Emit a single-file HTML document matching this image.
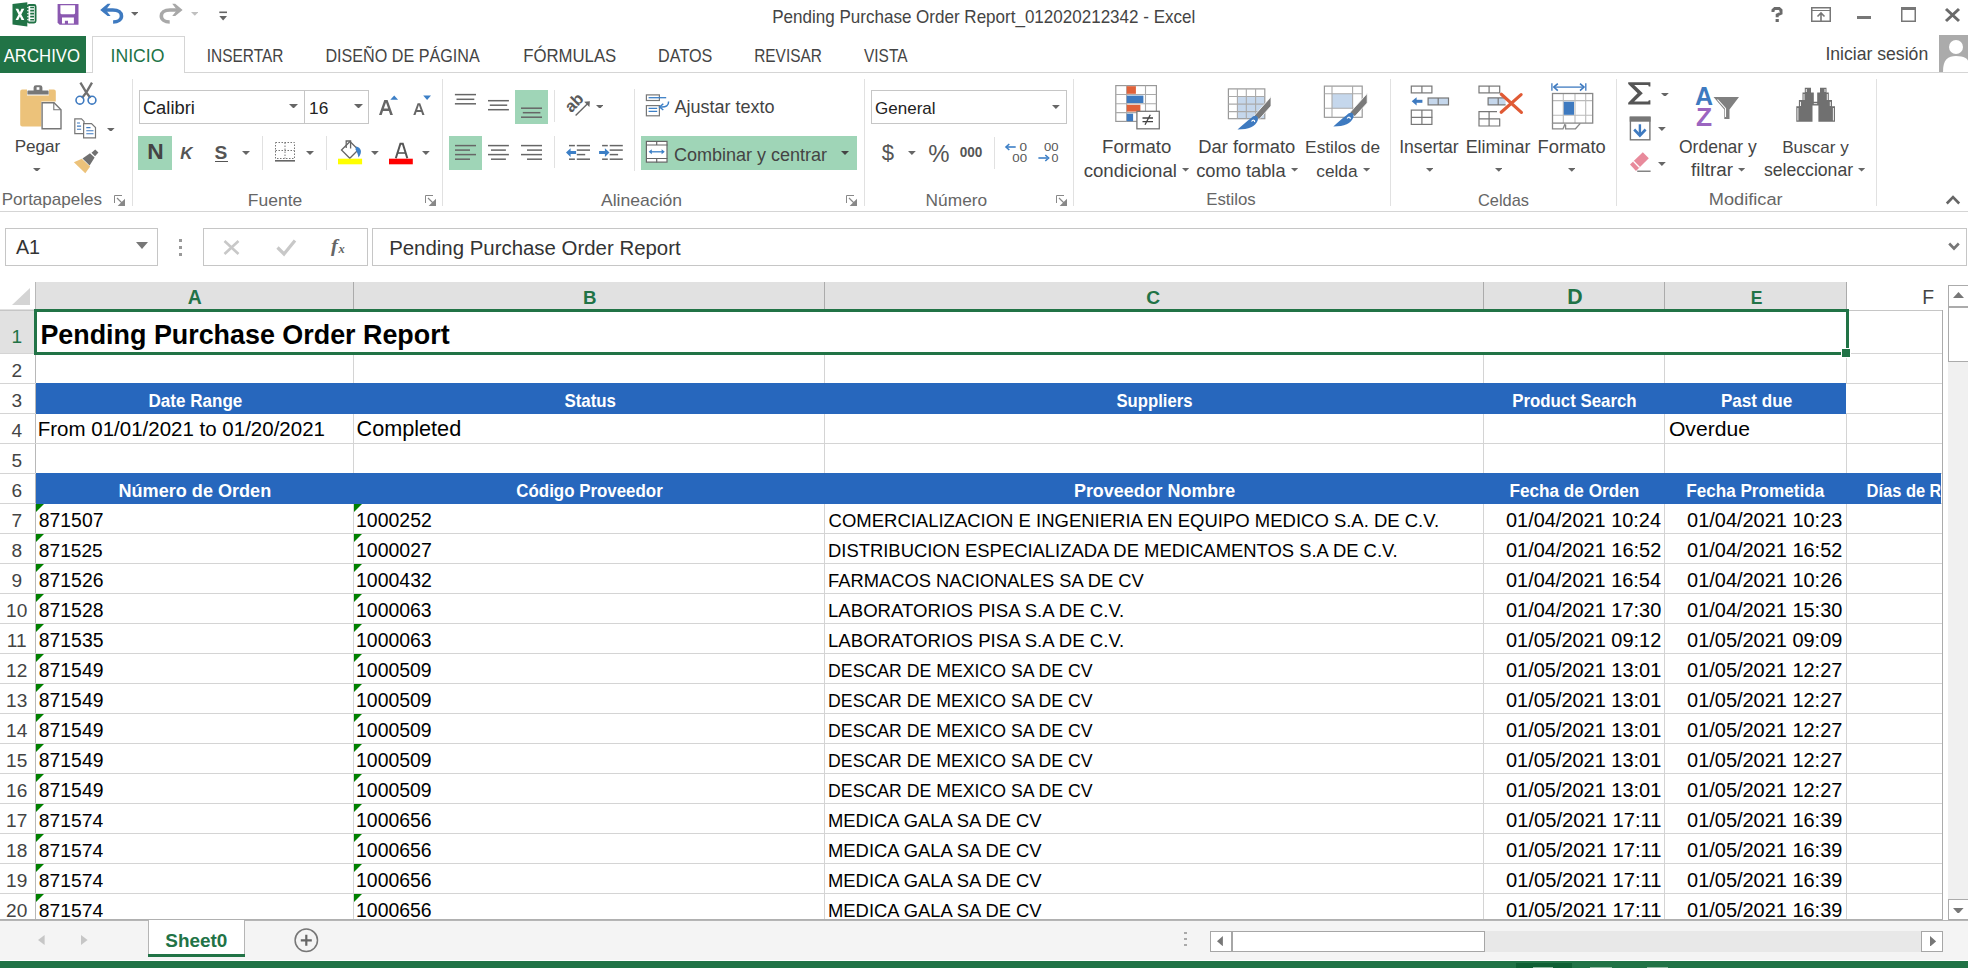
<!DOCTYPE html><html><head><meta charset="utf-8"><style>
html,body{margin:0;padding:0;}
body{width:1968px;height:968px;position:relative;overflow:hidden;background:#fff;font-family:'Liberation Sans',sans-serif;}
.t{position:absolute;white-space:pre;line-height:1;}
.b{position:absolute;}
</style></head><body>
<svg class="b" style="left:130.89999999999998px;top:11.799999999999999px" width="7.6" height="3.8" viewBox="0 0 7.6 3.8"><path d="M0 0H7.6L3.8 3.8Z" fill="#666"/></svg>
<svg class="b" style="left:190.89999999999998px;top:11.799999999999999px" width="7.6" height="3.8" viewBox="0 0 7.6 3.8"><path d="M0 0H7.6L3.8 3.8Z" fill="#c0c0c0"/></svg>
<svg class="b" style="left:1771px;top:7px" width="12" height="15" viewBox="0 0 12 15"><path d="M2 5 V3.2 L3.8 1.5 H8.2 L10 3.2 V6.2 L6.2 8 V10.2" fill="none" stroke="#6a6a6a" stroke-width="3"/><rect x="4.6" y="12" width="3.2" height="3" fill="#6a6a6a"/></svg>
<svg class="b" style="left:1811px;top:7px" width="20" height="15" viewBox="0 0 20 15"><rect x="0.75" y="0.75" width="18.5" height="13.5" fill="none" stroke="#777" stroke-width="1.5"/><path d="M1 3.5H19" stroke="#777" stroke-width="1"/><path d="M10 14V6.5M6.5 9.5L10 6L13.5 9.5" fill="none" stroke="#777" stroke-width="1.6"/></svg>
<div class="b" style="left:1857px;top:16px;width:14px;height:3px;background:#777;"></div>
<svg class="b" style="left:1901px;top:7px" width="15" height="15" viewBox="0 0 15 15"><rect x="0.75" y="0.75" width="13.5" height="13.5" fill="none" stroke="#777" stroke-width="1.5"/><rect x="0" y="0" width="15" height="3" fill="#777"/></svg>
<svg class="b" style="left:1943.5px;top:6.5px" width="17" height="16" viewBox="0 0 17 16"><path d="M2 2L15 14M15 2L2 14" stroke="#6a6a6a" stroke-width="3"/></svg>
<div class="b" style="left:0px;top:72px;width:1968px;height:1px;background:#d5d5d5;"></div>
<div class="b" style="left:0px;top:36px;width:86px;height:37px;background:#217346;"></div>
<div class="b" style="left:92px;top:36px;width:93px;height:37px;background:#fff;border:1px solid #d5d5d5;box-sizing:border-box;border-bottom:none;"></div>
<svg class="b" style="left:1939px;top:35px" width="29" height="37" viewBox="0 0 29 37"><rect width="29" height="37" fill="#ababab"/><circle cx="17" cy="12" r="7" fill="#fff"/><path d="M4 37 C4 24, 9 21, 17 21 C 25 21, 29 24, 29 26 V37Z" fill="#fff"/></svg>
<div class="b" style="left:0px;top:211px;width:1968px;height:1px;background:#d5d5d5;"></div>
<div class="b" style="left:132px;top:79px;width:1px;height:127px;background:#e1e1e1;"></div>
<div class="b" style="left:442px;top:79px;width:1px;height:127px;background:#e1e1e1;"></div>
<div class="b" style="left:864px;top:79px;width:1px;height:127px;background:#e1e1e1;"></div>
<div class="b" style="left:1073px;top:79px;width:1px;height:127px;background:#e1e1e1;"></div>
<div class="b" style="left:1390px;top:79px;width:1px;height:127px;background:#e1e1e1;"></div>
<div class="b" style="left:1616px;top:79px;width:1px;height:127px;background:#e1e1e1;"></div>
<div class="b" style="left:1876px;top:79px;width:1px;height:127px;background:#e1e1e1;"></div>
<svg class="b" style="left:114px;top:195px" width="11" height="11" viewBox="0 0 11 11"><path d="M0.5 8V0.5H8" fill="none" stroke="#888" stroke-width="1"/><path d="M3 3L9 9M10.5 5V10.5H5Z" stroke="#888" stroke-width="1.2" fill="#888"/></svg>
<svg class="b" style="left:425px;top:195px" width="11" height="11" viewBox="0 0 11 11"><path d="M0.5 8V0.5H8" fill="none" stroke="#888" stroke-width="1"/><path d="M3 3L9 9M10.5 5V10.5H5Z" stroke="#888" stroke-width="1.2" fill="#888"/></svg>
<svg class="b" style="left:846px;top:195px" width="11" height="11" viewBox="0 0 11 11"><path d="M0.5 8V0.5H8" fill="none" stroke="#888" stroke-width="1"/><path d="M3 3L9 9M10.5 5V10.5H5Z" stroke="#888" stroke-width="1.2" fill="#888"/></svg>
<svg class="b" style="left:1056px;top:195px" width="11" height="11" viewBox="0 0 11 11"><path d="M0.5 8V0.5H8" fill="none" stroke="#888" stroke-width="1"/><path d="M3 3L9 9M10.5 5V10.5H5Z" stroke="#888" stroke-width="1.2" fill="#888"/></svg>
<svg class="b" style="left:1945px;top:194px" width="16" height="11" viewBox="0 0 16 11"><path d="M1.8 9.5L8 3.2L14.2 9.5" fill="none" stroke="#666" stroke-width="2.6"/></svg>
<svg class="b" style="left:33.400000000000006px;top:167.6px" width="7.6" height="3.8" viewBox="0 0 7.6 3.8"><path d="M0 0H7.6L3.8 3.8Z" fill="#666"/></svg>
<svg class="b" style="left:107.0px;top:127.5px" width="7.6" height="3.8" viewBox="0 0 7.6 3.8"><path d="M0 0H7.6L3.8 3.8Z" fill="#666"/></svg>
<div class="b" style="left:139px;top:90px;width:166px;height:34px;background:#fff;border:1px solid #c6c6c6;box-sizing:border-box;"></div>
<div class="b" style="left:304px;top:90px;width:65px;height:34px;background:#fff;border:1px solid #c6c6c6;box-sizing:border-box;"></div>
<svg class="b" style="left:288.5px;top:103.75px" width="9.0" height="4.5" viewBox="0 0 9.0 4.5"><path d="M0 0H9.0L4.5 4.5Z" fill="#666"/></svg>
<svg class="b" style="left:353.5px;top:103.75px" width="9.0" height="4.5" viewBox="0 0 9.0 4.5"><path d="M0 0H9.0L4.5 4.5Z" fill="#666"/></svg>
<div class="b" style="left:138px;top:136px;width:34px;height:34px;background:#9fd5b7;"></div>
<div class="b" style="left:214.5px;top:160.5px;width:13px;height:1.5px;background:#555;"></div>
<svg class="b" style="left:242px;top:151.0px" width="8" height="4" viewBox="0 0 8 4"><path d="M0 0H8L4 4Z" fill="#666"/></svg>
<div class="b" style="left:262px;top:136px;width:1px;height:34px;background:#e1e1e1;"></div>
<svg class="b" style="left:306px;top:151.0px" width="8" height="4" viewBox="0 0 8 4"><path d="M0 0H8L4 4Z" fill="#666"/></svg>
<div class="b" style="left:326px;top:136px;width:1px;height:34px;background:#e1e1e1;"></div>
<svg class="b" style="left:370.8px;top:151.05px" width="7.8" height="3.9" viewBox="0 0 7.8 3.9"><path d="M0 0H7.8L3.9 3.9Z" fill="#666"/></svg>
<svg class="b" style="left:421.90000000000003px;top:151.05px" width="7.8" height="3.9" viewBox="0 0 7.8 3.9"><path d="M0 0H7.8L3.9 3.9Z" fill="#666"/></svg>
<div class="b" style="left:515px;top:89.7px;width:33px;height:34px;background:#9fd5b7;"></div>
<div class="b" style="left:554px;top:89.7px;width:1px;height:32.5px;background:#e1e1e1;"></div>
<svg class="b" style="left:595.8000000000001px;top:104.5px" width="7.6" height="3.8" viewBox="0 0 7.6 3.8"><path d="M0 0H7.6L3.8 3.8Z" fill="#666"/></svg>
<div class="b" style="left:634px;top:89px;width:1px;height:82px;background:#e1e1e1;"></div>
<div class="b" style="left:449px;top:136.2px;width:33px;height:34px;background:#9fd5b7;"></div>
<div class="b" style="left:554px;top:136.2px;width:1px;height:32px;background:#e1e1e1;"></div>
<div class="b" style="left:641px;top:136.2px;width:216px;height:34px;background:#9fd5b7;"></div>
<svg class="b" style="left:841px;top:151.0px" width="8" height="4" viewBox="0 0 8 4"><path d="M0 0H8L4 4Z" fill="#444"/></svg>
<div class="b" style="left:871px;top:90px;width:196px;height:34px;background:#fff;border:1px solid #c6c6c6;box-sizing:border-box;"></div>
<svg class="b" style="left:1051.8999999999999px;top:104.85px" width="7.8" height="3.9" viewBox="0 0 7.8 3.9"><path d="M0 0H7.8L3.9 3.9Z" fill="#666"/></svg>
<svg class="b" style="left:907.9px;top:151.45000000000002px" width="7.8" height="3.9" viewBox="0 0 7.8 3.9"><path d="M0 0H7.8L3.9 3.9Z" fill="#666"/></svg>
<div class="b" style="left:994px;top:136.7px;width:1px;height:32px;background:#e1e1e1;"></div>
<svg class="b" style="left:1181.6000000000001px;top:168.1px" width="7.2" height="3.6" viewBox="0 0 7.2 3.6"><path d="M0 0H7.2L3.6 3.6Z" fill="#666"/></svg>
<svg class="b" style="left:1291.0px;top:168.1px" width="7.2" height="3.6" viewBox="0 0 7.2 3.6"><path d="M0 0H7.2L3.6 3.6Z" fill="#666"/></svg>
<svg class="b" style="left:1362.8000000000002px;top:168.1px" width="7.2" height="3.6" viewBox="0 0 7.2 3.6"><path d="M0 0H7.2L3.6 3.6Z" fill="#666"/></svg>
<svg class="b" style="left:1425.6000000000001px;top:167.79999999999998px" width="7.6" height="3.8" viewBox="0 0 7.6 3.8"><path d="M0 0H7.6L3.8 3.8Z" fill="#666"/></svg>
<svg class="b" style="left:1494.5px;top:167.79999999999998px" width="7.6" height="3.8" viewBox="0 0 7.6 3.8"><path d="M0 0H7.6L3.8 3.8Z" fill="#666"/></svg>
<svg class="b" style="left:1567.9px;top:167.79999999999998px" width="7.6" height="3.8" viewBox="0 0 7.6 3.8"><path d="M0 0H7.6L3.8 3.8Z" fill="#666"/></svg>
<svg class="b" style="left:1660.8px;top:92.55px" width="7.8" height="3.9" viewBox="0 0 7.8 3.9"><path d="M0 0H7.8L3.9 3.9Z" fill="#666"/></svg>
<svg class="b" style="left:1657.8px;top:127.45px" width="7.8" height="3.9" viewBox="0 0 7.8 3.9"><path d="M0 0H7.8L3.9 3.9Z" fill="#666"/></svg>
<svg class="b" style="left:1657.8px;top:161.85000000000002px" width="7.8" height="3.9" viewBox="0 0 7.8 3.9"><path d="M0 0H7.8L3.9 3.9Z" fill="#666"/></svg>
<svg class="b" style="left:1738.1000000000001px;top:168.39999999999998px" width="7.2" height="3.6" viewBox="0 0 7.2 3.6"><path d="M0 0H7.2L3.6 3.6Z" fill="#666"/></svg>
<svg class="b" style="left:1857.8000000000002px;top:168.39999999999998px" width="7.2" height="3.6" viewBox="0 0 7.2 3.6"><path d="M0 0H7.2L3.6 3.6Z" fill="#666"/></svg>
<svg class="b" style="left:0;top:0" width="1968" height="968" viewBox="0 0 1968 968"><path d="M12.5 4.1 L27.3 2.2 V26.4 L12.5 24.4Z" fill="#217346"/><rect x="27.6" y="5" width="8" height="17.5" rx="1.5" fill="#fff" stroke="#217346" stroke-width="1.8"/><path d="M30.2 7.5H34M30.2 10.6H34M30.2 13.6H34M30.2 16.6H34M30.2 19.7H34" stroke="#217346" stroke-width="1.6"/><path d="M27.3 7.5H28.6M27.3 10.6H28.6M27.3 13.6H28.6M27.3 16.6H28.6M27.3 19.7H28.6" stroke="#fff" stroke-width="1.2"/><path d="M15.5 8.7 H18.3 L19.9 12.3 L21.5 8.7 H24.3 L21.3 14.4 L24.3 20.1 H21.5 L19.9 16.5 L18.3 20.1 H15.5 L18.5 14.4Z" fill="#fff"/><path d="M57.6 4.1 H78.5 V24.8 H59.6 L57.6 22.8Z" fill="#8a58b0"/><path d="M60.4 5.3 H75.1 V12.7 Q75.1 14.2 73.6 14.2 H61.9 Q60.4 14.2 60.4 12.7Z" fill="#fff"/><path d="M62 17.5 H73.9 V23.6 H68 V20.7 H64.9 V23.6 H62Z" fill="#fff"/><path d="M103.5 10 H112.8 C 118.5 10, 121.5 12.5, 121.5 16 C 121.5 19.5, 118 22, 113.1 22" fill="none" stroke="#3e7ac0" stroke-width="3.6"/><path d="M100.2 10 L107.6 3.8 H110.6 L105.7 10 L110.6 16 H107.6Z" fill="#3e7ac0"/><path d="M179.3 10 H170 C 164.3 10, 161.3 12.5, 161.3 16 C 161.3 19.5, 164.8 22, 169.7 22" fill="none" stroke="#a8a8a8" stroke-width="3.6"/><path d="M182.6 10 L175.2 3.8 H172.2 L177.1 10 L172.2 16 H175.2Z" fill="#a8a8a8"/><rect x="219.3" y="11.5" width="7.7" height="1.6" fill="#666"/><path d="M219.3 16 H227 L223.15 20.6Z" fill="#666"/><path d="M22.2 89.6 H27 V95.5 H48.8 V89.6 H53.8 Q55.8 89.6 55.8 91.6 V101.5 H41.4 V126.6 H22.2 Q20.2 126.6 20.2 124.6 V91.6 Q20.2 89.6 22.2 89.6Z" fill="#ecc27a"/><path d="M28.2 90.5 H33.6 V87.5 Q33.6 85.2 36 85.2 H40 Q42.4 85.2 42.4 87.5 V90.5 H47.8 Q48.6 90.5 48.6 91.5 V94.5 H27.4 V91.5 Q27.4 90.5 28.2 90.5Z" fill="#777"/><rect x="36.6" y="87.2" width="2.8" height="2.6" fill="#fff"/><path d="M42.1 102.7 H54 L61 109.7 V128.8 H42.1Z" fill="#fff" stroke="#777" stroke-width="1.4"/><path d="M53.8 102.7 V109.8 H61" fill="none" stroke="#777" stroke-width="1.1"/><path d="M80.4 82.6 L86.3 92.5 L82 98 M92 82.6 L86.3 92.5 L90.4 98" fill="none" stroke="#707070" stroke-width="2.3"/><circle cx="79.9" cy="100.2" r="3.9" fill="none" stroke="#3e7ac0" stroke-width="1.6"/><circle cx="92" cy="100.2" r="3.9" fill="none" stroke="#3e7ac0" stroke-width="1.6"/><path d="M74.8 118.9 H81.5 L84 121.4 V133.7 H74.8Z" fill="#fff" stroke="#777" stroke-width="1.2"/><path d="M77 123H80M77 126.1H81.1M77 129.2H81.1" stroke="#3e7ac0" stroke-width="1.1"/><path d="M83.6 123.6 H91.5 L95.5 127.6 V137.9 H83.6Z" fill="#fff" stroke="#777" stroke-width="1.2"/><path d="M86.3 127.6H90.5M86.3 130.7H93.5M86.3 133.8H93.5" stroke="#3e7ac0" stroke-width="1.1"/><path d="M73.9 162.2 L81.8 158.8 L90.2 166.6 L85.3 173.2Z" fill="#ecc27a"/><path d="M82.5 158.6 L90 153.2 L94.6 157.6 L89.6 165.4Z" fill="#707070"/><path d="M91.5 152.8 L95.2 149.4 L98.4 152.6 L95 156.2Z" fill="#707070"/><path d="M379 115 L384.3 100.1 H387.6 L392.9 115 H390.2 L388.9 111 H383 L381.7 115Z M383.8 108.6 H388.1 L386 102.5Z" fill="#666"/><path d="M390.3 99.7 L394.2 95.4 L398.1 99.7Z" fill="#3c7fc6"/><path d="M413.3 115 L417.6 103.2 H420.2 L424.5 115 H422.3 L421.3 112 H416.5 L415.5 115Z M417.2 109.9 H420.6 L418.9 105Z" fill="#666"/><path d="M423.2 95.4 H431 L427.1 100.1Z" fill="#3c7fc6"/><path d="M275.5 142.5H294.5V158.5H275.5ZM285 142.5V158.5M275.5 150.5H294.5" fill="none" stroke="#777" stroke-width="1" stroke-dasharray="1.5 1.5"/><rect x="275" y="160" width="20" height="1.6" fill="#666"/><path d="M350 141.5 L358.3 149.8 L349.8 158.3 L341.5 150 Z" fill="#fff" stroke="#666" stroke-width="1.3"/><path d="M346.2 148 V141 H350.6 V148.5" fill="none" stroke="#666" stroke-width="1.3"/><path d="M356 146.5 C 361 147.5, 363 152, 358.5 157.4 C 358 154, 356.5 151, 355.5 149.5Z" fill="#3c7fc6"/><rect x="338" y="158.7" width="24.1" height="5.6" fill="#ffff00"/><path d="M395.8 158.3 L400.4 143.8 H402.8 L407.3 158.3" fill="none" stroke="#555" stroke-width="2"/><path d="M397.8 153 H405.3" stroke="#555" stroke-width="1.6"/><rect x="389" y="158.7" width="23.8" height="5.6" fill="#ff0000"/><rect x="454.9" y="93.85" width="21.10" height="1.5" fill="#666"/><rect x="456.5" y="98.55" width="17.80" height="1.5" fill="#666"/><rect x="454.9" y="103.05" width="21.10" height="1.5" fill="#666"/><rect x="488" y="99.95" width="20.90" height="1.5" fill="#666"/><rect x="489.8" y="104.45" width="17.40" height="1.5" fill="#666"/><rect x="488" y="108.95" width="20.90" height="1.5" fill="#666"/><rect x="521" y="107.45" width="21.00" height="1.5" fill="#666"/><rect x="522.8" y="111.95" width="17.60" height="1.5" fill="#666"/><rect x="521" y="116.45" width="21.00" height="1.5" fill="#666"/><text x="0" y="0" font-family="Liberation Sans" font-size="16.4" font-weight="700" fill="#5a5a5a" transform="translate(571.15 113.3) rotate(-45)">ab</text><path d="M575.6 115.5 L588.3 103" stroke="#666" stroke-width="1.4"/><path d="M584.2 101.8 L589.9 101.3 L589.4 107Z" fill="#666"/><rect x="646.4" y="94.9" width="13" height="5.6" fill="none" stroke="#777" stroke-width="1.2"/><path d="M648.6 97.7H666.2" stroke="#3c7fc6" stroke-width="1.3"/><rect x="646.4" y="105.6" width="13" height="10.2" fill="none" stroke="#777" stroke-width="1.2"/><path d="M648.6 108.3H657.2M648.6 111.3H657.2" stroke="#3c7fc6" stroke-width="1.3"/><path d="M668.6 101.5 C 668.8 105.5, 666 107.2, 661 107" fill="none" stroke="#3c7fc6" stroke-width="1.5"/><path d="M663.3 103.8 L659.6 107 L663.3 110" fill="none" stroke="#3c7fc6" stroke-width="1.5"/><rect x="455" y="144.85" width="21.00" height="1.5" fill="#666"/><rect x="455" y="149.35" width="15.00" height="1.5" fill="#666"/><rect x="455" y="153.85" width="21.00" height="1.5" fill="#666"/><rect x="455" y="158.45" width="15.00" height="1.5" fill="#666"/><rect x="488" y="144.85" width="20.90" height="1.5" fill="#666"/><rect x="491" y="149.35" width="14.90" height="1.5" fill="#666"/><rect x="488" y="153.85" width="20.90" height="1.5" fill="#666"/><rect x="491" y="158.45" width="14.90" height="1.5" fill="#666"/><rect x="521" y="144.85" width="21.00" height="1.5" fill="#666"/><rect x="527" y="149.35" width="15.00" height="1.5" fill="#666"/><rect x="521" y="153.85" width="21.00" height="1.5" fill="#666"/><rect x="527" y="158.45" width="15.00" height="1.5" fill="#666"/><rect x="569" y="144.85" width="5.90" height="1.5" fill="#666"/><rect x="576.8" y="144.85" width="13.20" height="1.5" fill="#666"/><rect x="576.8" y="149.35" width="13.20" height="1.5" fill="#666"/><rect x="576.8" y="153.85" width="8.40" height="1.5" fill="#666"/><rect x="569" y="158.45" width="5.90" height="1.5" fill="#666"/><rect x="576.8" y="158.45" width="13.20" height="1.5" fill="#666"/><path d="M566 152.5 L570.6 148.2 V150.9 H576.1 V154.1 H570.6 V156.9Z" fill="#3c7fc6"/><rect x="602.1" y="144.85" width="5.70" height="1.5" fill="#666"/><rect x="609.7" y="144.85" width="13.10" height="1.5" fill="#666"/><rect x="609.7" y="149.35" width="13.10" height="1.5" fill="#666"/><rect x="609.7" y="153.85" width="8.40" height="1.5" fill="#666"/><rect x="602.1" y="158.45" width="5.70" height="1.5" fill="#666"/><rect x="609.7" y="158.45" width="13.10" height="1.5" fill="#666"/><path d="M609.5 152.5 L604.9 148.2 V150.9 H599.1 V154.1 H604.9 V156.9Z" fill="#3c7fc6"/><rect x="646.4" y="141.4" width="20.6" height="20.7" fill="#fff" stroke="#666" stroke-width="1.2"/><path d="M646 145H667.5M646 158.5H667.5M656.7 141V145M656.7 158.5V162.5" stroke="#666" stroke-width="1.2"/><path d="M650.5 151.8H663" stroke="#3c7fc6" stroke-width="1.3"/><path d="M648.6 151.8L651.8 149.3V154.3Z M664.8 151.8L661.6 149.3V154.3Z" fill="#3c7fc6"/><path d="M1007 147H1015.7" stroke="#3c7fc6" stroke-width="1.6"/><path d="M1009.3 144 L1006 147 L1009.3 150" fill="none" stroke="#3c7fc6" stroke-width="1.6"/><path d="M1038.4 158H1047.2" stroke="#3c7fc6" stroke-width="1.6"/><path d="M1045.3 155 L1048.6 158 L1045.3 161" fill="none" stroke="#3c7fc6" stroke-width="1.6"/><rect x="1115.8" y="85.6" width="40.6" height="35.8" fill="#fff" stroke="#999" stroke-width="1.2"/><path d="M1126.7 85.6V121.4M1145.5 85.6V121.4M1115.8 94.5H1156.4M1115.8 103.8H1156.4M1115.8 112.6H1156.4" stroke="#aaa" stroke-width="1.1"/><rect x="1126.7" y="86.2" width="9.2" height="7.6" fill="#e0623a"/><rect x="1126.7" y="95.6" width="16.7" height="7.4" fill="#3e7ac0"/><rect x="1126.7" y="104.8" width="13.7" height="6.8" fill="#e0623a"/><rect x="1126.7" y="113.7" width="6.4" height="7.5" fill="#3e7ac0"/><rect x="1136.9" y="111.3" width="22.4" height="17.5" fill="#fff" stroke="#777" stroke-width="1.3"/><path d="M1142.5 118H1153M1142.5 121.6H1153M1150.3 114.8L1145 124.8" stroke="#444" stroke-width="1.3"/><rect x="1237.4" y="96.5" width="27.4" height="22.4" fill="#c5d7ec"/><rect x="1228.4" y="88.9" width="36.4" height="29.8" fill="none" stroke="#999" stroke-width="1.2"/><path d="M1237.4 88.9V118.7M1246.3 88.9V118.7M1255.6 88.9V118.7M1228.4 96.5H1264.8M1228.4 104.1H1264.8M1228.4 111.6H1264.8" stroke="#aaa" stroke-width="1.1"/><path d="M1254.3 115.5 L1269.5 98.5 L1271 96.5 V106 L1259 119.5Z" fill="#7a7a7a" stroke="#fff" stroke-width="0.8"/><path d="M1251.2 118 C 1255 113.5, 1259.5 116, 1257.5 121 C 1255.5 126, 1249 129.5, 1237.5 129.5 C 1243 125, 1246 121.5, 1251.2 118Z" fill="#3e7ac0"/><path d="M1251.5 121.5 C 1253 119.5, 1255 120, 1254.5 122" fill="none" stroke="#fff" stroke-width="1.2"/><rect x="1332" y="93.8" width="20.6" height="14.4" fill="#c5d7ec"/><rect x="1324.4" y="86.1" width="37.8" height="31.2" fill="none" stroke="#999" stroke-width="1.2"/><path d="M1332 86.1V117.3M1352.6 86.1V117.3M1324.4 93.8H1362.2M1324.4 108.2H1362.2" stroke="#aaa" stroke-width="1.1"/><path d="M1350 112.5 L1365.8 95 L1367.2 93.3 V103 L1354.8 116.5Z" fill="#7a7a7a" stroke="#fff" stroke-width="0.8"/><path d="M1346.8 115 C 1350.6 110.5, 1355.1 113, 1353.1 118 C 1351.1 123, 1344.6 126.5, 1333.3 126.5 C 1338.6 122, 1341.6 118.5, 1346.8 115Z" fill="#3e7ac0"/><path d="M1347.1 118.5 C 1348.6 116.5, 1350.6 117, 1350.1 119" fill="none" stroke="#fff" stroke-width="1.2"/><rect x="1411.3" y="86.1" width="20.6" height="6.8" fill="#fff" stroke="#777" stroke-width="1.2"/><path d="M1421.9 86V93" stroke="#777" stroke-width="1.2"/><rect x="1428.1" y="98" width="20.4" height="6.9" fill="#c5d7ec" stroke="#777" stroke-width="1.2"/><path d="M1438.2 98V105" stroke="#777" stroke-width="1.2"/><path d="M1415 101.3H1422.4" stroke="#3e7ac0" stroke-width="3"/><path d="M1411.7 101.3 L1416.6 97.2 V105.4Z" fill="#3e7ac0"/><rect x="1411.3" y="110.1" width="20.6" height="14.3" fill="#fff" stroke="#777" stroke-width="1.2"/><path d="M1411 117.3H1432.3M1421.9 110V124.5" stroke="#777" stroke-width="1.2"/><rect x="1479" y="86.1" width="20.7" height="6.8" fill="#fff" stroke="#777" stroke-width="1.2"/><path d="M1489.1 86V93" stroke="#777" stroke-width="1.2"/><path d="M1505.6 97.9 H1488.1 V104.9 H1505.6" fill="#c5d7ec" stroke="#777" stroke-width="1.2"/><path d="M1498.2 98V105" stroke="#777" stroke-width="1.2"/><path d="M1499.7 118.5 V126 H1479 V111.6 H1497" fill="#fff" stroke="#777" stroke-width="1.2"/><path d="M1479 118.8H1499.7M1489.1 111.6V126" stroke="#777" stroke-width="1.2"/><path d="M1501.3 94.3 L1521.4 112.4 M1521.1 94.6 L1501.2 112.2" stroke="#e05a35" stroke-width="3.2" stroke-linecap="round"/><path d="M1551.9 83.3V90.8M1585.8 83.3V90.8" stroke="#3e7ac0" stroke-width="1.3"/><path d="M1555 87.1H1582.8" stroke="#3e7ac0" stroke-width="1.3"/><path d="M1557.8 83.6 L1553.8 87.1 L1557.8 90.6 M1580 83.6 L1584 87.1 L1580 90.6" fill="none" stroke="#3e7ac0" stroke-width="1.6"/><path d="M1563.3 93.5V123M1575 93.5V123M1585.7 93.5V123M1552.5 100.6H1592.7M1552.5 115.3H1592.7" stroke="#bbb" stroke-width="1.1"/><rect x="1552.5" y="93.5" width="40.2" height="29.6" fill="none" stroke="#888" stroke-width="1.3"/><rect x="1563.8" y="101.7" width="10.2" height="13.1" fill="#3e7ac0"/><path d="M1552.5 123.2 V128.8 H1563 L1565 124 M1565.6 124.5 V128.8 H1575.5 L1580.3 123.4" fill="none" stroke="#888" stroke-width="1.3"/><path d="M1628.2 82.2 H1650.4 V86.5 H1648.8 L1648.2 85 H1634.2 L1642.8 93.3 L1634.2 101.6 H1648.2 L1648.8 100.3 H1650.4 V104.6 H1628.2 V102.8 L1637.6 93.3 L1628.2 84Z" fill="#555"/><rect x="1630.4" y="117.3" width="19.5" height="22.5" fill="#fff" stroke="#777" stroke-width="1.4"/><rect x="1629.7" y="116.6" width="20.9" height="5.1" fill="#777"/><path d="M1639.9 124.3 V135" stroke="#3e7ac0" stroke-width="2.4"/><path d="M1634.2 129.5 L1639.9 135.5 L1645.6 129.5" fill="none" stroke="#3e7ac0" stroke-width="2.6"/><path d="M1630 164.6 L1642.8 152.3 L1648.8 158.3 L1636 171 Z" fill="#e88a9b"/><path d="M1633.4 161.3 L1639.6 167.5" stroke="#fff" stroke-width="1.3"/><path d="M1637.2 171.2 H1650.6" stroke="#666" stroke-width="1.2"/><path d="M1713.5 97 H1739 L1729.5 109.5 V119 H1724.3 V109.5Z" fill="#808080"/><path d="M1717.5 99.5 L1725.5 108.5 V117" fill="none" stroke="#fff" stroke-width="1.1"/><path d="M1796.3 121.8 V106.3 H1798.9 V100.1 H1802.5 V92.4 H1804.8 V87.7 H1811 V92.4 H1813.8 V101.7 H1817.2 V92.4 H1820 V87.7 H1826.5 V92.4 H1828.8 V100.1 H1832 V106.3 H1835 V121.8 H1818.4 V105.6 H1812.5 V121.8Z" fill="#707070"/><path d="M1797.9 108V120.5M1800.5 101.8V106M1804 94V100M1806.3 89V92M1833.4 108V120.5M1830.3 101.8V106M1827.3 94V100M1825 89V92" stroke="#fff" stroke-width="0.9"/><path d="M1813.8 103.6H1817.2" stroke="#fff" stroke-width="0.8"/></svg>
<div class="b" style="left:5px;top:228px;width:153px;height:38px;background:#fff;border:1px solid #c6c6c6;box-sizing:border-box;"></div>
<svg class="b" style="left:136px;top:242px" width="12" height="7" viewBox="0 0 12 7"><path d="M0 0H12L6 7Z" fill="#777"/></svg>
<div class="b" style="left:179px;top:239px;width:3px;height:3px;background:#999;"></div>
<div class="b" style="left:179px;top:246px;width:3px;height:3px;background:#999;"></div>
<div class="b" style="left:179px;top:253px;width:3px;height:3px;background:#999;"></div>
<div class="b" style="left:203px;top:228px;width:165px;height:38px;background:#fff;border:1px solid #c6c6c6;box-sizing:border-box;"></div>
<svg class="b" style="left:222px;top:239px" width="19" height="17" viewBox="0 0 19 17"><path d="M2.5 2L16.5 15M16.5 2L2.5 15" stroke="#c8c8c8" stroke-width="2.6"/></svg>
<svg class="b" style="left:275px;top:238px" width="22" height="19" viewBox="0 0 22 19"><path d="M2.5 9.5L9 16L20 2.5" fill="none" stroke="#c8c8c8" stroke-width="3.2"/></svg>
<div class="b" style="left:372px;top:228px;width:1595px;height:38px;background:#fff;border:1px solid #c6c6c6;box-sizing:border-box;"></div>
<svg class="b" style="left:1948px;top:241.5px" width="12" height="9" viewBox="0 0 12 9"><path d="M1.2 1.5L6 6.5L10.8 1.5" fill="none" stroke="#777" stroke-width="2.6"/></svg>
<div class="b" style="left:35px;top:282px;width:1811px;height:27px;background:#e1e1e1;"></div>
<div class="b" style="left:0px;top:309px;width:35px;height:44px;background:#e1e1e1;"></div>
<svg class="b" style="left:12px;top:288px" width="18" height="17" viewBox="0 0 18 17"><path d="M18 0V17H0Z" fill="#d4d4d4"/></svg>
<div class="b" style="left:353px;top:282px;width:1px;height:27px;background:#ababab;"></div>
<div class="b" style="left:824px;top:282px;width:1px;height:27px;background:#ababab;"></div>
<div class="b" style="left:1483px;top:282px;width:1px;height:27px;background:#ababab;"></div>
<div class="b" style="left:1664px;top:282px;width:1px;height:27px;background:#ababab;"></div>
<div class="b" style="left:1846px;top:282px;width:1px;height:27px;background:#ababab;"></div>
<div class="b" style="left:35px;top:282px;width:1px;height:638px;background:#b8b8b8;"></div>
<div class="b" style="left:0px;top:310px;width:35px;height:1px;background:#c6c6c6;"></div>
<div class="b" style="left:0px;top:353px;width:1942px;height:1px;background:#d4d4d4;"></div>
<div class="b" style="left:0px;top:383px;width:1942px;height:1px;background:#d4d4d4;"></div>
<div class="b" style="left:0px;top:413px;width:1942px;height:1px;background:#d4d4d4;"></div>
<div class="b" style="left:0px;top:443px;width:1942px;height:1px;background:#d4d4d4;"></div>
<div class="b" style="left:0px;top:473px;width:1942px;height:1px;background:#d4d4d4;"></div>
<div class="b" style="left:0px;top:503px;width:1942px;height:1px;background:#d4d4d4;"></div>
<div class="b" style="left:0px;top:533px;width:1942px;height:1px;background:#d4d4d4;"></div>
<div class="b" style="left:0px;top:563px;width:1942px;height:1px;background:#d4d4d4;"></div>
<div class="b" style="left:0px;top:593px;width:1942px;height:1px;background:#d4d4d4;"></div>
<div class="b" style="left:0px;top:623px;width:1942px;height:1px;background:#d4d4d4;"></div>
<div class="b" style="left:0px;top:653px;width:1942px;height:1px;background:#d4d4d4;"></div>
<div class="b" style="left:0px;top:683px;width:1942px;height:1px;background:#d4d4d4;"></div>
<div class="b" style="left:0px;top:713px;width:1942px;height:1px;background:#d4d4d4;"></div>
<div class="b" style="left:0px;top:743px;width:1942px;height:1px;background:#d4d4d4;"></div>
<div class="b" style="left:0px;top:773px;width:1942px;height:1px;background:#d4d4d4;"></div>
<div class="b" style="left:0px;top:803px;width:1942px;height:1px;background:#d4d4d4;"></div>
<div class="b" style="left:0px;top:833px;width:1942px;height:1px;background:#d4d4d4;"></div>
<div class="b" style="left:0px;top:863px;width:1942px;height:1px;background:#d4d4d4;"></div>
<div class="b" style="left:0px;top:893px;width:1942px;height:1px;background:#d4d4d4;"></div>
<div class="b" style="left:1942px;top:310px;width:1px;height:610px;background:#ababab;"></div>
<div class="b" style="left:1846px;top:310px;width:96px;height:1px;background:#c6c6c6;"></div>
<div class="b" style="left:353px;top:353px;width:1px;height:30px;background:#d4d4d4;"></div>
<div class="b" style="left:824px;top:353px;width:1px;height:30px;background:#d4d4d4;"></div>
<div class="b" style="left:1483px;top:353px;width:1px;height:30px;background:#d4d4d4;"></div>
<div class="b" style="left:1664px;top:353px;width:1px;height:30px;background:#d4d4d4;"></div>
<div class="b" style="left:1846px;top:353px;width:1px;height:30px;background:#d4d4d4;"></div>
<div class="b" style="left:353px;top:413px;width:1px;height:30px;background:#d4d4d4;"></div>
<div class="b" style="left:824px;top:413px;width:1px;height:30px;background:#d4d4d4;"></div>
<div class="b" style="left:1483px;top:413px;width:1px;height:30px;background:#d4d4d4;"></div>
<div class="b" style="left:1664px;top:413px;width:1px;height:30px;background:#d4d4d4;"></div>
<div class="b" style="left:1846px;top:413px;width:1px;height:30px;background:#d4d4d4;"></div>
<div class="b" style="left:353px;top:443px;width:1px;height:30px;background:#d4d4d4;"></div>
<div class="b" style="left:824px;top:443px;width:1px;height:30px;background:#d4d4d4;"></div>
<div class="b" style="left:1483px;top:443px;width:1px;height:30px;background:#d4d4d4;"></div>
<div class="b" style="left:1664px;top:443px;width:1px;height:30px;background:#d4d4d4;"></div>
<div class="b" style="left:1846px;top:443px;width:1px;height:30px;background:#d4d4d4;"></div>
<div class="b" style="left:353px;top:503px;width:1px;height:30px;background:#d4d4d4;"></div>
<div class="b" style="left:824px;top:503px;width:1px;height:30px;background:#d4d4d4;"></div>
<div class="b" style="left:1483px;top:503px;width:1px;height:30px;background:#d4d4d4;"></div>
<div class="b" style="left:1664px;top:503px;width:1px;height:30px;background:#d4d4d4;"></div>
<div class="b" style="left:1846px;top:503px;width:1px;height:30px;background:#d4d4d4;"></div>
<div class="b" style="left:353px;top:533px;width:1px;height:30px;background:#d4d4d4;"></div>
<div class="b" style="left:824px;top:533px;width:1px;height:30px;background:#d4d4d4;"></div>
<div class="b" style="left:1483px;top:533px;width:1px;height:30px;background:#d4d4d4;"></div>
<div class="b" style="left:1664px;top:533px;width:1px;height:30px;background:#d4d4d4;"></div>
<div class="b" style="left:1846px;top:533px;width:1px;height:30px;background:#d4d4d4;"></div>
<div class="b" style="left:353px;top:563px;width:1px;height:30px;background:#d4d4d4;"></div>
<div class="b" style="left:824px;top:563px;width:1px;height:30px;background:#d4d4d4;"></div>
<div class="b" style="left:1483px;top:563px;width:1px;height:30px;background:#d4d4d4;"></div>
<div class="b" style="left:1664px;top:563px;width:1px;height:30px;background:#d4d4d4;"></div>
<div class="b" style="left:1846px;top:563px;width:1px;height:30px;background:#d4d4d4;"></div>
<div class="b" style="left:353px;top:593px;width:1px;height:30px;background:#d4d4d4;"></div>
<div class="b" style="left:824px;top:593px;width:1px;height:30px;background:#d4d4d4;"></div>
<div class="b" style="left:1483px;top:593px;width:1px;height:30px;background:#d4d4d4;"></div>
<div class="b" style="left:1664px;top:593px;width:1px;height:30px;background:#d4d4d4;"></div>
<div class="b" style="left:1846px;top:593px;width:1px;height:30px;background:#d4d4d4;"></div>
<div class="b" style="left:353px;top:623px;width:1px;height:30px;background:#d4d4d4;"></div>
<div class="b" style="left:824px;top:623px;width:1px;height:30px;background:#d4d4d4;"></div>
<div class="b" style="left:1483px;top:623px;width:1px;height:30px;background:#d4d4d4;"></div>
<div class="b" style="left:1664px;top:623px;width:1px;height:30px;background:#d4d4d4;"></div>
<div class="b" style="left:1846px;top:623px;width:1px;height:30px;background:#d4d4d4;"></div>
<div class="b" style="left:353px;top:653px;width:1px;height:30px;background:#d4d4d4;"></div>
<div class="b" style="left:824px;top:653px;width:1px;height:30px;background:#d4d4d4;"></div>
<div class="b" style="left:1483px;top:653px;width:1px;height:30px;background:#d4d4d4;"></div>
<div class="b" style="left:1664px;top:653px;width:1px;height:30px;background:#d4d4d4;"></div>
<div class="b" style="left:1846px;top:653px;width:1px;height:30px;background:#d4d4d4;"></div>
<div class="b" style="left:353px;top:683px;width:1px;height:30px;background:#d4d4d4;"></div>
<div class="b" style="left:824px;top:683px;width:1px;height:30px;background:#d4d4d4;"></div>
<div class="b" style="left:1483px;top:683px;width:1px;height:30px;background:#d4d4d4;"></div>
<div class="b" style="left:1664px;top:683px;width:1px;height:30px;background:#d4d4d4;"></div>
<div class="b" style="left:1846px;top:683px;width:1px;height:30px;background:#d4d4d4;"></div>
<div class="b" style="left:353px;top:713px;width:1px;height:30px;background:#d4d4d4;"></div>
<div class="b" style="left:824px;top:713px;width:1px;height:30px;background:#d4d4d4;"></div>
<div class="b" style="left:1483px;top:713px;width:1px;height:30px;background:#d4d4d4;"></div>
<div class="b" style="left:1664px;top:713px;width:1px;height:30px;background:#d4d4d4;"></div>
<div class="b" style="left:1846px;top:713px;width:1px;height:30px;background:#d4d4d4;"></div>
<div class="b" style="left:353px;top:743px;width:1px;height:30px;background:#d4d4d4;"></div>
<div class="b" style="left:824px;top:743px;width:1px;height:30px;background:#d4d4d4;"></div>
<div class="b" style="left:1483px;top:743px;width:1px;height:30px;background:#d4d4d4;"></div>
<div class="b" style="left:1664px;top:743px;width:1px;height:30px;background:#d4d4d4;"></div>
<div class="b" style="left:1846px;top:743px;width:1px;height:30px;background:#d4d4d4;"></div>
<div class="b" style="left:353px;top:773px;width:1px;height:30px;background:#d4d4d4;"></div>
<div class="b" style="left:824px;top:773px;width:1px;height:30px;background:#d4d4d4;"></div>
<div class="b" style="left:1483px;top:773px;width:1px;height:30px;background:#d4d4d4;"></div>
<div class="b" style="left:1664px;top:773px;width:1px;height:30px;background:#d4d4d4;"></div>
<div class="b" style="left:1846px;top:773px;width:1px;height:30px;background:#d4d4d4;"></div>
<div class="b" style="left:353px;top:803px;width:1px;height:30px;background:#d4d4d4;"></div>
<div class="b" style="left:824px;top:803px;width:1px;height:30px;background:#d4d4d4;"></div>
<div class="b" style="left:1483px;top:803px;width:1px;height:30px;background:#d4d4d4;"></div>
<div class="b" style="left:1664px;top:803px;width:1px;height:30px;background:#d4d4d4;"></div>
<div class="b" style="left:1846px;top:803px;width:1px;height:30px;background:#d4d4d4;"></div>
<div class="b" style="left:353px;top:833px;width:1px;height:30px;background:#d4d4d4;"></div>
<div class="b" style="left:824px;top:833px;width:1px;height:30px;background:#d4d4d4;"></div>
<div class="b" style="left:1483px;top:833px;width:1px;height:30px;background:#d4d4d4;"></div>
<div class="b" style="left:1664px;top:833px;width:1px;height:30px;background:#d4d4d4;"></div>
<div class="b" style="left:1846px;top:833px;width:1px;height:30px;background:#d4d4d4;"></div>
<div class="b" style="left:353px;top:863px;width:1px;height:30px;background:#d4d4d4;"></div>
<div class="b" style="left:824px;top:863px;width:1px;height:30px;background:#d4d4d4;"></div>
<div class="b" style="left:1483px;top:863px;width:1px;height:30px;background:#d4d4d4;"></div>
<div class="b" style="left:1664px;top:863px;width:1px;height:30px;background:#d4d4d4;"></div>
<div class="b" style="left:1846px;top:863px;width:1px;height:30px;background:#d4d4d4;"></div>
<div class="b" style="left:353px;top:893px;width:1px;height:27px;background:#d4d4d4;"></div>
<div class="b" style="left:824px;top:893px;width:1px;height:27px;background:#d4d4d4;"></div>
<div class="b" style="left:1483px;top:893px;width:1px;height:27px;background:#d4d4d4;"></div>
<div class="b" style="left:1664px;top:893px;width:1px;height:27px;background:#d4d4d4;"></div>
<div class="b" style="left:1846px;top:893px;width:1px;height:27px;background:#d4d4d4;"></div>
<div class="b" style="left:1846px;top:310px;width:1px;height:43px;background:#d4d4d4;"></div>
<div class="b" style="left:36px;top:383px;width:1810px;height:31px;background:#2767bd;"></div>
<div class="b" style="left:36px;top:473px;width:1905px;height:31px;background:#2767bd;"></div>
<div class="b" style="left:33.8px;top:308.6px;width:1815px;height:46.4px;border:3px solid #217346;box-sizing:border-box;"></div>
<div class="b" style="left:1841.2px;top:348px;width:9.6px;height:9.6px;background:#fff;"></div>
<div class="b" style="left:1842.2px;top:349px;width:7.7px;height:7.8px;background:#217346;"></div>
<div class="b" style="left:0;top:0;width:1942px;height:920px;overflow:hidden">
<svg class="b" style="left:36px;top:504px" width="8" height="8" viewBox="0 0 8 8"><path d="M0 0H8L0 8Z" fill="#008000"/></svg>
<svg class="b" style="left:354px;top:504px" width="8" height="8" viewBox="0 0 8 8"><path d="M0 0H8L0 8Z" fill="#008000"/></svg>
<svg class="b" style="left:36px;top:534px" width="8" height="8" viewBox="0 0 8 8"><path d="M0 0H8L0 8Z" fill="#008000"/></svg>
<svg class="b" style="left:354px;top:534px" width="8" height="8" viewBox="0 0 8 8"><path d="M0 0H8L0 8Z" fill="#008000"/></svg>
<svg class="b" style="left:36px;top:564px" width="8" height="8" viewBox="0 0 8 8"><path d="M0 0H8L0 8Z" fill="#008000"/></svg>
<svg class="b" style="left:354px;top:564px" width="8" height="8" viewBox="0 0 8 8"><path d="M0 0H8L0 8Z" fill="#008000"/></svg>
<svg class="b" style="left:36px;top:594px" width="8" height="8" viewBox="0 0 8 8"><path d="M0 0H8L0 8Z" fill="#008000"/></svg>
<svg class="b" style="left:354px;top:594px" width="8" height="8" viewBox="0 0 8 8"><path d="M0 0H8L0 8Z" fill="#008000"/></svg>
<svg class="b" style="left:36px;top:624px" width="8" height="8" viewBox="0 0 8 8"><path d="M0 0H8L0 8Z" fill="#008000"/></svg>
<svg class="b" style="left:354px;top:624px" width="8" height="8" viewBox="0 0 8 8"><path d="M0 0H8L0 8Z" fill="#008000"/></svg>
<svg class="b" style="left:36px;top:654px" width="8" height="8" viewBox="0 0 8 8"><path d="M0 0H8L0 8Z" fill="#008000"/></svg>
<svg class="b" style="left:354px;top:654px" width="8" height="8" viewBox="0 0 8 8"><path d="M0 0H8L0 8Z" fill="#008000"/></svg>
<svg class="b" style="left:36px;top:684px" width="8" height="8" viewBox="0 0 8 8"><path d="M0 0H8L0 8Z" fill="#008000"/></svg>
<svg class="b" style="left:354px;top:684px" width="8" height="8" viewBox="0 0 8 8"><path d="M0 0H8L0 8Z" fill="#008000"/></svg>
<svg class="b" style="left:36px;top:714px" width="8" height="8" viewBox="0 0 8 8"><path d="M0 0H8L0 8Z" fill="#008000"/></svg>
<svg class="b" style="left:354px;top:714px" width="8" height="8" viewBox="0 0 8 8"><path d="M0 0H8L0 8Z" fill="#008000"/></svg>
<svg class="b" style="left:36px;top:744px" width="8" height="8" viewBox="0 0 8 8"><path d="M0 0H8L0 8Z" fill="#008000"/></svg>
<svg class="b" style="left:354px;top:744px" width="8" height="8" viewBox="0 0 8 8"><path d="M0 0H8L0 8Z" fill="#008000"/></svg>
<svg class="b" style="left:36px;top:774px" width="8" height="8" viewBox="0 0 8 8"><path d="M0 0H8L0 8Z" fill="#008000"/></svg>
<svg class="b" style="left:354px;top:774px" width="8" height="8" viewBox="0 0 8 8"><path d="M0 0H8L0 8Z" fill="#008000"/></svg>
<svg class="b" style="left:36px;top:804px" width="8" height="8" viewBox="0 0 8 8"><path d="M0 0H8L0 8Z" fill="#008000"/></svg>
<svg class="b" style="left:354px;top:804px" width="8" height="8" viewBox="0 0 8 8"><path d="M0 0H8L0 8Z" fill="#008000"/></svg>
<svg class="b" style="left:36px;top:834px" width="8" height="8" viewBox="0 0 8 8"><path d="M0 0H8L0 8Z" fill="#008000"/></svg>
<svg class="b" style="left:354px;top:834px" width="8" height="8" viewBox="0 0 8 8"><path d="M0 0H8L0 8Z" fill="#008000"/></svg>
<svg class="b" style="left:36px;top:864px" width="8" height="8" viewBox="0 0 8 8"><path d="M0 0H8L0 8Z" fill="#008000"/></svg>
<svg class="b" style="left:354px;top:864px" width="8" height="8" viewBox="0 0 8 8"><path d="M0 0H8L0 8Z" fill="#008000"/></svg>
<svg class="b" style="left:36px;top:894px" width="8" height="8" viewBox="0 0 8 8"><path d="M0 0H8L0 8Z" fill="#008000"/></svg>
<svg class="b" style="left:354px;top:894px" width="8" height="8" viewBox="0 0 8 8"><path d="M0 0H8L0 8Z" fill="#008000"/></svg>
</div>
<div class="b" style="left:1943px;top:282px;width:25px;height:638px;background:#fff;"></div>
<div class="b" style="left:1947.5px;top:285px;width:21px;height:22px;background:#fff;border:1px solid #ababab;box-sizing:border-box;border-right:none;"></div>
<svg class="b" style="left:1953px;top:292px" width="11" height="6" viewBox="0 0 11 6"><path d="M0 6L5.5 0L11 6Z" fill="#777"/></svg>
<div class="b" style="left:1947.5px;top:307px;width:21px;height:55px;background:#fff;border:1px solid #ababab;box-sizing:border-box;border-right:none;"></div>
<div class="b" style="left:1947.5px;top:362px;width:21px;height:537px;background:#f0f0f0;"></div>
<div class="b" style="left:1947.5px;top:899px;width:21px;height:21px;background:#fff;border:1px solid #ababab;box-sizing:border-box;border-right:none;"></div>
<svg class="b" style="left:1953.4px;top:907.5px" width="10.6" height="5.8" viewBox="0 0 10.6 5.8"><path d="M0 0H10.6L5.3 5.8Z" fill="#777"/></svg>
<div class="b" style="left:0px;top:919px;width:1943px;height:1px;background:#b0b0b0;"></div>
<div class="b" style="left:0px;top:920px;width:1968px;height:41px;background:#f4f4f4;"></div>
<div class="b" style="left:0px;top:920px;width:1968px;height:1px;background:#b5b5b5;"></div>
<svg class="b" style="left:38px;top:935px" width="6.6" height="10" viewBox="0 0 6.6 10"><path d="M6.6 0V10L0 5Z" fill="#c6c6c6"/></svg>
<svg class="b" style="left:81.2px;top:935px" width="6.6" height="10" viewBox="0 0 6.6 10"><path d="M0 0V10L6.6 5Z" fill="#c6c6c6"/></svg>
<div class="b" style="left:148px;top:920px;width:97px;height:37px;background:#fff;border:1px solid #b5b5b5;box-sizing:border-box;border-top:none;border-bottom:none;"></div>
<div class="b" style="left:148px;top:954px;width:97px;height:2.6px;background:#217346;"></div>
<svg class="b" style="left:294px;top:928px" width="25" height="25" viewBox="0 0 25 25"><circle cx="12.3" cy="12.3" r="11.2" fill="none" stroke="#777" stroke-width="1.5"/><path d="M12.3 6.8V17.8M6.8 12.3H17.8" stroke="#666" stroke-width="2.2"/></svg>
<div class="b" style="left:1184.2px;top:931.9000000000001px;width:2.6px;height:2.6px;background:#aaa;"></div>
<div class="b" style="left:1184.2px;top:937.7px;width:2.6px;height:2.6px;background:#aaa;"></div>
<div class="b" style="left:1184.2px;top:943.5px;width:2.6px;height:2.6px;background:#aaa;"></div>
<div class="b" style="left:1210px;top:930.5px;width:732px;height:21px;background:#e8e8e8;"></div>
<div class="b" style="left:1210px;top:930.5px;width:22px;height:21px;background:#fff;border:1px solid #a6a6a6;box-sizing:border-box;"></div>
<svg class="b" style="left:1216.9px;top:936.1px" width="5.9" height="10.3" viewBox="0 0 5.9 10.3"><path d="M5.9 0V10.3L0 5.15Z" fill="#777"/></svg>
<div class="b" style="left:1231.5px;top:930.5px;width:253.5px;height:21px;background:#fff;border:1px solid #a6a6a6;box-sizing:border-box;"></div>
<div class="b" style="left:1921px;top:930.5px;width:21.6px;height:21px;background:#fff;border:1px solid #a6a6a6;box-sizing:border-box;"></div>
<svg class="b" style="left:1929.6px;top:935.8px" width="6.1" height="10.7" viewBox="0 0 6.1 10.7"><path d="M0 0V10.7L6.1 5.35Z" fill="#777"/></svg>
<div class="b" style="left:0px;top:959.6px;width:1968px;height:1px;background:#fff;"></div>
<div class="b" style="left:0px;top:960.8px;width:1968px;height:8px;background:#217346;"></div>
<div class="b" style="left:1515.5px;top:963px;width:56.7px;height:6px;background:#0f6034;"></div>
<div class="b" style="left:1533.4px;top:967px;width:19.5px;height:2px;background:#8fb8a0;"></div>
<div class="b" style="left:1590px;top:967px;width:21.5px;height:2px;background:#8fb8a0;"></div>
<div class="b" style="left:1647px;top:967px;width:21.4px;height:2px;background:#8fb8a0;"></div>
<svg class="b" style="left:0;top:0;pointer-events:none" width="1968" height="968" viewBox="0 0 1968 968" font-family="Liberation Sans"><defs><clipPath id="cgrid"><rect x="0" y="0" width="1942" height="920"/></clipPath><clipPath id="cF"><rect x="1846" y="473" width="95.2" height="31"/></clipPath></defs><text x="772.11" y="22.65" font-size="18.58" fill="#444" transform="translate(773.60 0) scale(0.9169 1) translate(-773.60 0)">Pending Purchase Order Report_012020212342 - Excel</text>
<text x="3.70" y="61.65" font-size="18.44" fill="#fff" transform="translate(3.70 0) scale(0.9093 1) translate(-3.70 0)">ARCHIVO</text>
<text x="110.44" y="61.65" font-size="18.44" fill="#217346" transform="translate(112.10 0) scale(0.9567 1) translate(-112.10 0)">INICIO</text>
<text x="206.44" y="61.65" font-size="18.44" fill="#444" transform="translate(208.10 0) scale(0.8384 1) translate(-208.10 0)">INSERTAR</text>
<text x="325.23" y="61.65" font-size="18.44" fill="#444" transform="translate(326.70 0) scale(0.8764 1) translate(-326.70 0)">DISEÑO DE PÁGINA</text>
<text x="523.03" y="61.65" font-size="18.44" fill="#444" transform="translate(524.50 0) scale(0.9100 1) translate(-524.50 0)">FÓRMULAS</text>
<text x="657.93" y="61.65" font-size="18.44" fill="#444" transform="translate(659.40 0) scale(0.8783 1) translate(-659.40 0)">DATOS</text>
<text x="753.93" y="61.65" font-size="18.44" fill="#444" transform="translate(755.40 0) scale(0.8366 1) translate(-755.40 0)">REVISAR</text>
<text x="864.02" y="61.65" font-size="18.44" fill="#444" transform="translate(864.20 0) scale(0.8369 1) translate(-864.20 0)">VISTA</text>
<text x="1825.42" y="60.25" font-size="17.61" fill="#444">Iniciar sesión</text>
<text x="1.69" y="205.35" font-size="16.34" fill="#666" transform="translate(3.00 0) scale(1.0429 1) translate(-3.00 0)">Portapapeles</text>
<text x="247.94" y="205.55" font-size="16.34" fill="#666" transform="translate(249.25 0) scale(1.0694 1) translate(-249.25 0)">Fuente</text>
<text x="601.00" y="205.55" font-size="16.34" fill="#666" transform="translate(601.00 0) scale(1.0760 1) translate(-601.00 0)">Alineación</text>
<text x="925.69" y="205.55" font-size="16.34" fill="#666" transform="translate(927.00 0) scale(1.0598 1) translate(-927.00 0)">Número</text>
<text x="1206.29" y="205.45" font-size="16.34" fill="#666" transform="translate(1207.60 0) scale(1.0293 1) translate(-1207.60 0)">Estilos</text>
<text x="1477.98" y="205.85" font-size="16.34" fill="#666" transform="translate(1478.80 0) scale(1.0038 1) translate(-1478.80 0)">Celdas</text>
<text x="1708.99" y="205.35" font-size="16.34" fill="#666" transform="translate(1710.30 0) scale(1.1142 1) translate(-1710.30 0)">Modificar</text>
<text x="14.63" y="152.45" font-size="17.12" fill="#444">Pegar</text>
<text x="142.88" y="113.75" font-size="18.35" fill="#222">Calibri</text>
<text x="309.12" y="113.75" font-size="17.27" fill="#222">16</text>
<text x="147.21" y="158.85" font-size="22.76" fill="#444" font-weight="700">N</text>
<text x="180.26" y="158.85" font-size="16.97" fill="#555" font-weight="700" font-style="italic">K</text>
<text x="214.62" y="158.85" font-size="19.17" fill="#555" font-weight="700">S</text>
<text x="674.40" y="113.45" font-size="18.04" fill="#444">Ajustar texto</text>
<text x="673.90" y="161.05" font-size="18.03" fill="#444">Combinar y centrar</text>
<text x="875.05" y="113.65" font-size="17.01" fill="#222">General</text>
<text x="881.78" y="160.45" font-size="22.08" fill="#555">$</text>
<text x="928.24" y="162.25" font-size="23.95" fill="#555">%</text>
<text x="959.64" y="157.15" font-size="13.97" fill="#555" font-weight="700" transform="translate(960.20 0) scale(0.9727 1) translate(-960.20 0)">000</text>
<text x="1019.56" y="150.65" font-size="10.89" fill="#555" transform="translate(1020.00 0) scale(1.2431 1) translate(-1020.00 0)">0</text>
<text x="1012.36" y="161.95" font-size="10.89" fill="#555" transform="translate(1012.80 0) scale(1.2210 1) translate(-1012.80 0)">00</text>
<text x="1044.06" y="150.65" font-size="10.89" fill="#555" transform="translate(1044.50 0) scale(1.2031 1) translate(-1044.50 0)">00</text>
<text x="1051.56" y="161.95" font-size="10.89" fill="#555" transform="translate(1052.00 0) scale(1.1474 1) translate(-1052.00 0)">0</text>
<text x="1102.11" y="152.85" font-size="18.61" fill="#444">Formato</text>
<text x="1083.65" y="176.95" font-size="18.65" fill="#444">condicional</text>
<text x="1198.23" y="152.85" font-size="18.39" fill="#444">Dar formato</text>
<text x="1196.17" y="176.95" font-size="18.29" fill="#444">como tabla</text>
<text x="1305.12" y="152.85" font-size="17.29" fill="#444">Estilos de</text>
<text x="1316.31" y="176.95" font-size="17.28" fill="#444">celda</text>
<text x="1399.22" y="152.65" font-size="17.56" fill="#444">Insertar</text>
<text x="1465.67" y="152.65" font-size="17.93" fill="#444">Eliminar</text>
<text x="1537.53" y="152.65" font-size="18.33" fill="#444">Formato</text>
<text x="1694.95" y="104.95" font-size="25.00" fill="#3e7ac0" font-weight="700">A</text>
<text x="1696.01" y="125.85" font-size="26.36" fill="#9b65c0" font-weight="700">Z</text>
<text x="1679.03" y="152.85" font-size="17.49" fill="#444">Ordenar y</text>
<text x="1691.11" y="176.25" font-size="18.82" fill="#444">filtrar</text>
<text x="1782.13" y="152.85" font-size="17.11" fill="#444">Buscar y</text>
<text x="1763.97" y="176.25" font-size="17.62" fill="#444">seleccionar</text>
<text x="15.90" y="254.45" font-size="19.74" fill="#333">A1</text>
<text x="331.00" y="252.45" font-size="18.50" fill="#666" font-weight="700" font-family="Liberation Serif" font-style="italic" transform="translate(331.00 0) scale(1.1000 1) translate(-331.00 0)">f</text>
<text x="338.50" y="253.45" font-size="12.50" fill="#666" font-weight="700" font-family="Liberation Serif" font-style="italic">x</text>
<text x="389.17" y="255.05" font-size="20.41" fill="#333">Pending Purchase Order Report</text>
<text x="187.82" y="304.45" font-size="19.39" fill="#217346" font-weight="700">A</text>
<text x="582.99" y="304.45" font-size="18.69" fill="#217346" font-weight="700">B</text>
<text x="1146.23" y="304.45" font-size="19.23" fill="#217346" font-weight="700">C</text>
<text x="1567.31" y="304.45" font-size="21.31" fill="#217346" font-weight="700">D</text>
<text x="1750.78" y="304.45" font-size="17.50" fill="#217346" font-weight="700">E</text>
<text x="1922.25" y="304.45" font-size="19.39" fill="#444">F</text>
<text x="16.70" y="343.45" font-size="19.10" fill="#217346" text-anchor="middle">1</text>
<text x="16.70" y="376.65" font-size="19.10" fill="#444" text-anchor="middle">2</text>
<text x="16.70" y="406.65" font-size="19.10" fill="#444" text-anchor="middle">3</text>
<text x="16.70" y="436.65" font-size="19.10" fill="#444" text-anchor="middle">4</text>
<text x="16.70" y="466.65" font-size="19.10" fill="#444" text-anchor="middle">5</text>
<text x="16.70" y="496.65" font-size="19.10" fill="#444" text-anchor="middle">6</text>
<text x="16.70" y="526.65" font-size="19.10" fill="#444" text-anchor="middle">7</text>
<text x="16.70" y="556.65" font-size="19.10" fill="#444" text-anchor="middle">8</text>
<text x="16.70" y="586.65" font-size="19.10" fill="#444" text-anchor="middle">9</text>
<text x="16.70" y="616.65" font-size="19.10" fill="#444" text-anchor="middle">10</text>
<text x="16.70" y="646.65" font-size="19.10" fill="#444" text-anchor="middle">11</text>
<text x="16.70" y="676.65" font-size="19.10" fill="#444" text-anchor="middle">12</text>
<text x="16.70" y="706.65" font-size="19.10" fill="#444" text-anchor="middle">13</text>
<text x="16.70" y="736.65" font-size="19.10" fill="#444" text-anchor="middle">14</text>
<text x="16.70" y="766.65" font-size="19.10" fill="#444" text-anchor="middle">15</text>
<text x="16.70" y="796.65" font-size="19.10" fill="#444" text-anchor="middle">16</text>
<text x="16.70" y="826.65" font-size="19.10" fill="#444" text-anchor="middle">17</text>
<text x="16.70" y="856.65" font-size="19.10" fill="#444" text-anchor="middle">18</text>
<text x="16.70" y="886.65" font-size="19.10" fill="#444" text-anchor="middle">19</text>
<text x="16.70" y="916.65" font-size="19.10" fill="#444" text-anchor="middle">20</text>
<text x="40.42" y="343.65" font-size="26.88" fill="#000" font-weight="700">Pending Purchase Order Report</text>
<text x="148.43" y="407.25" font-size="18.16" fill="#fff" font-weight="700" transform="translate(149.70 0) scale(0.9394 1) translate(-149.70 0)">Date Range</text>
<text x="564.36" y="407.25" font-size="18.16" fill="#fff" font-weight="700" transform="translate(564.90 0) scale(0.9297 1) translate(-564.90 0)">Status</text>
<text x="1116.46" y="407.25" font-size="18.16" fill="#fff" font-weight="700" transform="translate(1117.00 0) scale(0.9184 1) translate(-1117.00 0)">Suppliers</text>
<text x="1512.13" y="407.25" font-size="18.16" fill="#fff" font-weight="700" transform="translate(1513.40 0) scale(0.9271 1) translate(-1513.40 0)">Product Search</text>
<text x="1720.83" y="407.25" font-size="18.16" fill="#fff" font-weight="700" transform="translate(1722.10 0) scale(0.9428 1) translate(-1722.10 0)">Past due</text>
<text x="37.76" y="436.25" font-size="20.50" fill="#000">From 01/01/2021 to 01/20/2021</text>
<text x="356.52" y="436.45" font-size="21.65" fill="#000">Completed</text>
<text x="1668.94" y="436.45" font-size="21.12" fill="#000">Overdue</text>
<text x="118.53" y="496.95" font-size="18.16" fill="#fff" font-weight="700" transform="translate(119.80 0) scale(0.9962 1) translate(-119.80 0)">Número de Orden</text>
<text x="516.27" y="496.95" font-size="18.16" fill="#fff" font-weight="700" transform="translate(517.00 0) scale(0.9307 1) translate(-517.00 0)">Código Proveedor</text>
<text x="1073.93" y="496.95" font-size="18.16" fill="#fff" font-weight="700" transform="translate(1075.20 0) scale(0.9871 1) translate(-1075.20 0)">Proveedor Nombre</text>
<text x="1509.33" y="496.95" font-size="18.16" fill="#fff" font-weight="700" transform="translate(1510.60 0) scale(0.9474 1) translate(-1510.60 0)">Fecha de Orden</text>
<text x="1686.13" y="496.95" font-size="18.16" fill="#fff" font-weight="700" transform="translate(1687.40 0) scale(0.9437 1) translate(-1687.40 0)">Fecha Prometida</text>
<text x="1866.47" y="496.65" font-size="17.60" fill="#fff" font-weight="700" transform="translate(1867.70 0) scale(0.9389 1) translate(-1867.70 0)" clip-path="url(#cF)">Días de</text>
<text x="1929.37" y="496.65" font-size="17.60" fill="#fff" font-weight="700" transform="translate(1930.60 0) scale(0.9389 1) translate(-1930.60 0)" clip-path="url(#cF)">Retraso</text>
<text x="38.82" y="526.65" font-size="19.38" fill="#000" clip-path="url(#cgrid)">871507</text>
<text x="356.04" y="526.65" font-size="19.47" fill="#000" clip-path="url(#cgrid)">1000252</text>
<text x="828.58" y="526.65" font-size="18.49" fill="#000" clip-path="url(#cgrid)">COMERCIALIZACION E INGENIERIA EN EQUIPO MEDICO S.A. DE C.V.</text>
<text x="1506.00" y="526.65" font-size="19.91" fill="#000" clip-path="url(#cgrid)">01/04/2021 10:24</text>
<text x="1687.10" y="526.65" font-size="19.96" fill="#000" clip-path="url(#cgrid)">01/04/2021 10:23</text>
<text x="38.83" y="556.65" font-size="19.17" fill="#000" clip-path="url(#cgrid)">871525</text>
<text x="356.04" y="556.65" font-size="19.47" fill="#000" clip-path="url(#cgrid)">1000027</text>
<text x="828.03" y="556.65" font-size="18.42" fill="#000" clip-path="url(#cgrid)">DISTRIBUCION ESPECIALIZADA DE MEDICAMENTOS S.A DE C.V.</text>
<text x="1506.00" y="556.65" font-size="19.96" fill="#000" clip-path="url(#cgrid)">01/04/2021 16:52</text>
<text x="1687.10" y="556.65" font-size="19.96" fill="#000" clip-path="url(#cgrid)">01/04/2021 16:52</text>
<text x="38.82" y="586.65" font-size="19.38" fill="#000" clip-path="url(#cgrid)">871526</text>
<text x="356.04" y="586.65" font-size="19.47" fill="#000" clip-path="url(#cgrid)">1000432</text>
<text x="828.03" y="586.65" font-size="18.34" fill="#000" clip-path="url(#cgrid)">FARMACOS NACIONALES SA DE CV</text>
<text x="1506.00" y="586.65" font-size="19.91" fill="#000" clip-path="url(#cgrid)">01/04/2021 16:54</text>
<text x="1687.10" y="586.65" font-size="19.96" fill="#000" clip-path="url(#cgrid)">01/04/2021 10:26</text>
<text x="38.82" y="616.65" font-size="19.38" fill="#000" clip-path="url(#cgrid)">871528</text>
<text x="356.05" y="616.65" font-size="19.42" fill="#000" clip-path="url(#cgrid)">1000063</text>
<text x="828.01" y="616.65" font-size="18.60" fill="#000" clip-path="url(#cgrid)">LABORATORIOS PISA S.A DE C.V.</text>
<text x="1506.00" y="616.65" font-size="19.94" fill="#000" clip-path="url(#cgrid)">01/04/2021 17:30</text>
<text x="1687.10" y="616.65" font-size="19.94" fill="#000" clip-path="url(#cgrid)">01/04/2021 15:30</text>
<text x="38.82" y="646.65" font-size="19.38" fill="#000" clip-path="url(#cgrid)">871535</text>
<text x="356.05" y="646.65" font-size="19.42" fill="#000" clip-path="url(#cgrid)">1000063</text>
<text x="828.01" y="646.65" font-size="18.60" fill="#000" clip-path="url(#cgrid)">LABORATORIOS PISA S.A DE C.V.</text>
<text x="1506.00" y="646.65" font-size="19.96" fill="#000" clip-path="url(#cgrid)">01/05/2021 09:12</text>
<text x="1687.10" y="646.65" font-size="19.96" fill="#000" clip-path="url(#cgrid)">01/05/2021 09:09</text>
<text x="38.82" y="676.65" font-size="19.38" fill="#000" clip-path="url(#cgrid)">871549</text>
<text x="356.05" y="676.65" font-size="19.42" fill="#000" clip-path="url(#cgrid)">1000509</text>
<text x="828.08" y="676.65" font-size="17.70" fill="#000" clip-path="url(#cgrid)">DESCAR DE MEXICO SA DE CV</text>
<text x="1506.00" y="676.65" font-size="19.96" fill="#000" clip-path="url(#cgrid)">01/05/2021 13:01</text>
<text x="1687.10" y="676.65" font-size="19.96" fill="#000" clip-path="url(#cgrid)">01/05/2021 12:27</text>
<text x="38.82" y="706.65" font-size="19.38" fill="#000" clip-path="url(#cgrid)">871549</text>
<text x="356.05" y="706.65" font-size="19.42" fill="#000" clip-path="url(#cgrid)">1000509</text>
<text x="828.08" y="706.65" font-size="17.70" fill="#000" clip-path="url(#cgrid)">DESCAR DE MEXICO SA DE CV</text>
<text x="1506.00" y="706.65" font-size="19.96" fill="#000" clip-path="url(#cgrid)">01/05/2021 13:01</text>
<text x="1687.10" y="706.65" font-size="19.96" fill="#000" clip-path="url(#cgrid)">01/05/2021 12:27</text>
<text x="38.82" y="736.65" font-size="19.38" fill="#000" clip-path="url(#cgrid)">871549</text>
<text x="356.05" y="736.65" font-size="19.42" fill="#000" clip-path="url(#cgrid)">1000509</text>
<text x="828.08" y="736.65" font-size="17.70" fill="#000" clip-path="url(#cgrid)">DESCAR DE MEXICO SA DE CV</text>
<text x="1506.00" y="736.65" font-size="19.96" fill="#000" clip-path="url(#cgrid)">01/05/2021 13:01</text>
<text x="1687.10" y="736.65" font-size="19.96" fill="#000" clip-path="url(#cgrid)">01/05/2021 12:27</text>
<text x="38.82" y="766.65" font-size="19.38" fill="#000" clip-path="url(#cgrid)">871549</text>
<text x="356.05" y="766.65" font-size="19.42" fill="#000" clip-path="url(#cgrid)">1000509</text>
<text x="828.08" y="766.65" font-size="17.70" fill="#000" clip-path="url(#cgrid)">DESCAR DE MEXICO SA DE CV</text>
<text x="1506.00" y="766.65" font-size="19.96" fill="#000" clip-path="url(#cgrid)">01/05/2021 13:01</text>
<text x="1687.10" y="766.65" font-size="19.96" fill="#000" clip-path="url(#cgrid)">01/05/2021 12:27</text>
<text x="38.82" y="796.65" font-size="19.38" fill="#000" clip-path="url(#cgrid)">871549</text>
<text x="356.05" y="796.65" font-size="19.42" fill="#000" clip-path="url(#cgrid)">1000509</text>
<text x="828.08" y="796.65" font-size="17.70" fill="#000" clip-path="url(#cgrid)">DESCAR DE MEXICO SA DE CV</text>
<text x="1506.00" y="796.65" font-size="19.96" fill="#000" clip-path="url(#cgrid)">01/05/2021 13:01</text>
<text x="1687.10" y="796.65" font-size="19.96" fill="#000" clip-path="url(#cgrid)">01/05/2021 12:27</text>
<text x="38.83" y="826.65" font-size="19.27" fill="#000" clip-path="url(#cgrid)">871574</text>
<text x="356.05" y="826.65" font-size="19.42" fill="#000" clip-path="url(#cgrid)">1000656</text>
<text x="828.03" y="826.65" font-size="18.40" fill="#000" clip-path="url(#cgrid)">MEDICA GALA SA DE CV</text>
<text x="1505.99" y="826.65" font-size="20.17" fill="#000" clip-path="url(#cgrid)">01/05/2021 17:11</text>
<text x="1687.10" y="826.65" font-size="19.96" fill="#000" clip-path="url(#cgrid)">01/05/2021 16:39</text>
<text x="38.83" y="856.65" font-size="19.27" fill="#000" clip-path="url(#cgrid)">871574</text>
<text x="356.05" y="856.65" font-size="19.42" fill="#000" clip-path="url(#cgrid)">1000656</text>
<text x="828.03" y="856.65" font-size="18.40" fill="#000" clip-path="url(#cgrid)">MEDICA GALA SA DE CV</text>
<text x="1505.99" y="856.65" font-size="20.17" fill="#000" clip-path="url(#cgrid)">01/05/2021 17:11</text>
<text x="1687.10" y="856.65" font-size="19.96" fill="#000" clip-path="url(#cgrid)">01/05/2021 16:39</text>
<text x="38.83" y="886.65" font-size="19.27" fill="#000" clip-path="url(#cgrid)">871574</text>
<text x="356.05" y="886.65" font-size="19.42" fill="#000" clip-path="url(#cgrid)">1000656</text>
<text x="828.03" y="886.65" font-size="18.40" fill="#000" clip-path="url(#cgrid)">MEDICA GALA SA DE CV</text>
<text x="1505.99" y="886.65" font-size="20.17" fill="#000" clip-path="url(#cgrid)">01/05/2021 17:11</text>
<text x="1687.10" y="886.65" font-size="19.96" fill="#000" clip-path="url(#cgrid)">01/05/2021 16:39</text>
<text x="38.83" y="916.65" font-size="19.27" fill="#000" clip-path="url(#cgrid)">871574</text>
<text x="356.05" y="916.65" font-size="19.42" fill="#000" clip-path="url(#cgrid)">1000656</text>
<text x="828.03" y="916.65" font-size="18.40" fill="#000" clip-path="url(#cgrid)">MEDICA GALA SA DE CV</text>
<text x="1505.99" y="916.65" font-size="20.17" fill="#000" clip-path="url(#cgrid)">01/05/2021 17:11</text>
<text x="1687.10" y="916.65" font-size="19.96" fill="#000" clip-path="url(#cgrid)">01/05/2021 16:39</text>
<text x="165.33" y="946.55" font-size="18.99" fill="#217346" font-weight="700" transform="translate(165.90 0) scale(0.9972 1) translate(-165.90 0)">Sheet0</text></svg>
</body></html>
